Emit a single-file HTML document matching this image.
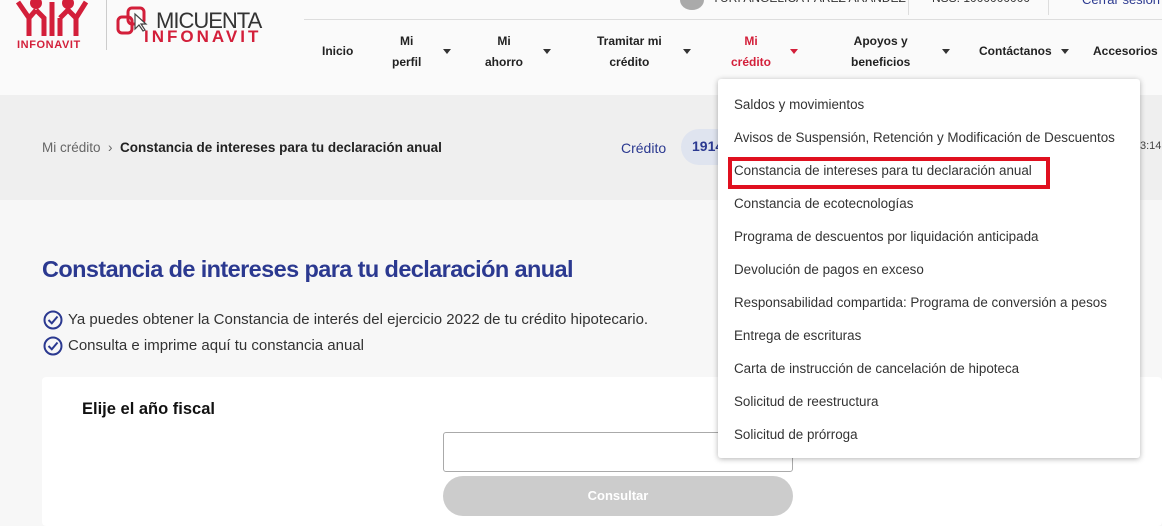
<!DOCTYPE html>
<html><head><meta charset="utf-8"><style>
*{margin:0;padding:0;box-sizing:border-box}
body{width:1162px;height:526px;overflow:hidden;background:#f7f7f7;font-family:"Liberation Sans",sans-serif;position:relative;color:#222}
.hdr{position:absolute;left:0;top:0;width:1162px;height:95px;background:#fafafa;box-shadow:0 2px 4px rgba(0,0,0,.25)}
.abs{position:absolute}
.nav{font-size:12px;font-weight:bold;color:#222;text-align:center;line-height:21px}
.tri{position:absolute;width:0;height:0;border-left:4px solid transparent;border-right:4px solid transparent;border-top:5px solid #333}
.band{position:absolute;left:0;top:95px;width:1162px;height:105px;background:#efefef}
.dd{position:absolute;left:718px;top:79px;width:422px;height:379px;background:#fff;border-radius:3px;box-shadow:0 1px 6px rgba(0,0,0,.3)}
.dd div{position:absolute;left:16px;font-size:13.4px;color:#333;white-space:nowrap}
.chk{position:absolute}
</style></head><body>
<div class="hdr">
 <svg class="abs" style="left:15px;top:0" width="74" height="40" viewBox="0 0 74 40">
  <circle cx="21" cy="3" r="6" fill="#d31f3a"/><circle cx="53" cy="3" r="6" fill="#d31f3a"/>
  <path d="M3 2 L14 18 L14 36 M21 10 L14 18 M21 10 L29 18 L29 36 M37 2 L37 36 M45 18 L53 10 L61 18 L61 36 M45 18 L45 36 M71 2 L61 18" stroke="#d31f3a" stroke-width="5" fill="none"/>
 </svg>
 <div class="abs" style="left:17px;top:39px;font-size:11px;font-weight:bold;color:#d31f3a;letter-spacing:.6px">INFONAVIT</div>
 <div class="abs" style="left:106px;top:0;width:1px;height:50px;background:#ccc"></div>
 <svg class="abs" style="left:116px;top:5px" width="40" height="32" viewBox="0 0 40 32">
  <rect x="2" y="12" width="14" height="16" rx="4" fill="none" stroke="#d31f3a" stroke-width="3"/>
  <rect x="12" y="3" width="16" height="16" rx="4" fill="none" stroke="#d31f3a" stroke-width="3"/>
  <path d="M19 9 L19 24 L23 20 L27 26 L29 25 L25 19 L30 19 Z" fill="#fff" stroke="#444" stroke-width="1.2"/>
 </svg>
 <div class="abs" style="left:156px;top:8px;font-size:22px;color:#333;letter-spacing:-1px">MICUENTA</div>
 <div class="abs" style="left:144px;top:27px;font-size:17px;font-weight:bold;color:#d31f3a;letter-spacing:3px">INFONAVIT</div>
 <div class="abs" style="left:304px;top:19px;width:858px;height:1px;background:#ddd"></div>
 <div class="abs" style="left:680px;top:-10px;width:24px;height:20px;border-radius:50%;background:#aaa"></div>
 <div class="abs" style="left:712px;top:-9px;font-size:12px;color:#333">YURI ANGELICA PAREZ ARANDEZ</div>
 <div class="abs" style="left:932px;top:-9px;font-size:12px;color:#333">NSS: 1000000000</div>
 <div class="abs" style="left:908px;top:0;width:1px;height:15px;background:#ddd"></div>
 <div class="abs" style="left:1048px;top:0;width:1px;height:15px;background:#ddd"></div>
 <div class="abs" style="left:1082px;top:-8px;font-size:13px;color:#2b3990">Cerrar sesión</div>
 <div class="abs nav" style="left:322px;top:41px">Inicio</div>
 <div class="abs nav" style="left:392px;top:31px">Mi<br>perfil</div><div class="tri" style="left:443px;top:49px"></div>
 <div class="abs nav" style="left:485px;top:31px">Mi<br>ahorro</div><div class="tri" style="left:543px;top:49px"></div>
 <div class="abs nav" style="left:597px;top:31px">Tramitar mi<br>crédito</div><div class="tri" style="left:683px;top:49px"></div>
 <div class="abs nav" style="left:731px;top:31px;color:#d31f3a">Mi<br>crédito</div><div class="tri" style="left:790px;top:49px;border-top-color:#d31f3a"></div>
 <div class="abs nav" style="left:851px;top:31px">Apoyos y<br>beneficios</div><div class="tri" style="left:942px;top:49px"></div>
 <div class="abs nav" style="left:979px;top:41px">Contáctanos</div><div class="tri" style="left:1061px;top:49px"></div>
 <div class="abs nav" style="left:1093px;top:41px">Accesorios</div>
</div>
<div class="band">
 <div class="abs" style="left:42px;top:45px;font-size:13.5px;color:#666">Mi crédito &nbsp;›&nbsp; <b style="color:#222">Constancia de intereses para tu declaración anual</b></div>
 <div class="abs" style="left:621px;top:45px;font-size:14px;color:#2b3990">Crédito</div>
 <div class="abs" style="left:681px;top:34px;width:60px;height:36px;border-radius:18px;background:#dfe4ef;font-size:14px;font-weight:bold;color:#2b3990;padding:9px 11px">1914</div>
 <div class="abs" style="left:1140px;top:45px;font-size:11px;color:#444">3:14</div>
</div>
<div class="abs" style="left:42px;top:256px;font-size:23.5px;font-weight:bold;color:#2b3990;letter-spacing:-.6px">Constancia de intereses para tu declaración anual</div>
<svg class="chk" style="left:43px;top:310px" width="20" height="20" viewBox="0 0 20 20"><circle cx="10" cy="10" r="8.5" fill="none" stroke="#2b3990" stroke-width="2"/><path d="M5.5 10 L8.8 13.3 L14.5 6.5" fill="none" stroke="#2b3990" stroke-width="2"/></svg>
<div class="abs" style="left:68px;top:311px;font-size:15px;color:#333">Ya puedes obtener la Constancia de interés del ejercicio 2022 de tu crédito hipotecario.</div>
<svg class="chk" style="left:43px;top:336px" width="20" height="20" viewBox="0 0 20 20"><circle cx="10" cy="10" r="8.5" fill="none" stroke="#2b3990" stroke-width="2"/><path d="M5.5 10 L8.8 13.3 L14.5 6.5" fill="none" stroke="#2b3990" stroke-width="2"/></svg>
<div class="abs" style="left:68px;top:337px;font-size:15px;color:#333">Consulta e imprime aquí tu constancia anual</div>
<div class="abs" style="left:42px;top:377px;width:1120px;height:149px;background:#fff;border-radius:4px"></div>
<div class="abs" style="left:82px;top:400px;font-size:16.5px;font-weight:bold;color:#111">Elije el año fiscal</div>
<div class="abs" style="left:443px;top:432px;width:350px;height:40px;border:1px solid #aaa;border-radius:3px;background:#fff"></div>
<div class="abs" style="left:443px;top:476px;width:350px;height:40px;border-radius:20px;background:#ccc;color:#fff;font-size:13px;font-weight:bold;text-align:center;line-height:40px">Consultar</div>
<div class="dd">
 <div style="top:18px">Saldos y movimientos</div>
 <div style="top:51px">Avisos de Suspensión, Retención y Modificación de Descuentos</div>
 <div style="top:84px">Constancia de intereses para tu declaración anual</div>
 <div style="top:117px">Constancia de ecotecnologías</div>
 <div style="top:150px">Programa de descuentos por liquidación anticipada</div>
 <div style="top:183px">Devolución de pagos en exceso</div>
 <div style="top:216px">Responsabilidad compartida: Programa de conversión a pesos</div>
 <div style="top:249px">Entrega de escrituras</div>
 <div style="top:282px">Carta de instrucción de cancelación de hipoteca</div>
 <div style="top:315px">Solicitud de reestructura</div>
 <div style="top:348px">Solicitud de prórroga</div>
</div>
<div class="abs" style="left:728px;top:157px;width:322px;height:32px;border:4px solid #e0101f"></div>
</body></html>
